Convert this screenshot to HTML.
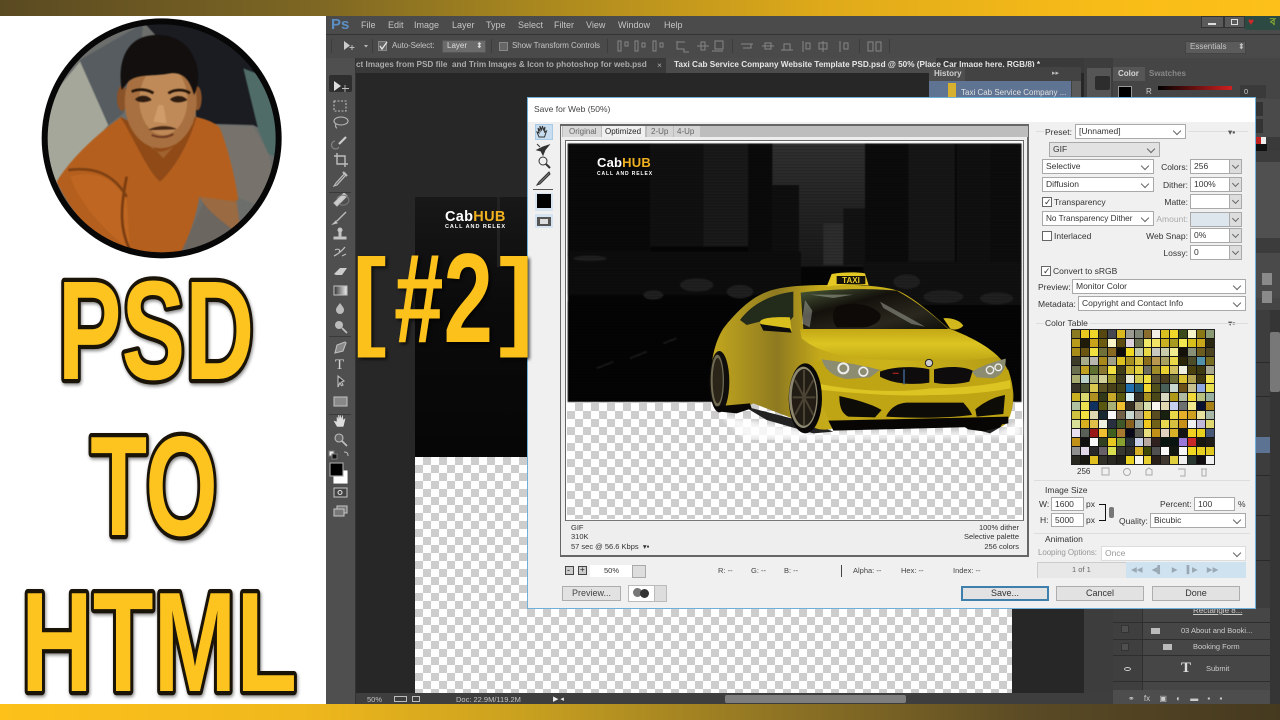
<!DOCTYPE html>
<html><head><meta charset="utf-8"><title>PSD to HTML #2</title>
<style>
*{box-sizing:border-box}
html,body{margin:0;padding:0;background:#fff}
body{width:1280px;height:720px;overflow:hidden;position:relative;font-family:"Liberation Sans",sans-serif}
.a,.t,.s,.n{position:absolute}
.t{white-space:nowrap;line-height:10px;font-size:8.5px;color:#333}
.g{color:#c4c4c4}
.r{text-align:right}
.s,.n{background:#fff;border:1px solid #a9a9a9;height:15px;line-height:13px;font-size:8.5px;color:#333;padding-left:3px;white-space:nowrap}
.s:after{content:"";position:absolute;right:5px;top:3px;width:5px;height:5px;border:solid #666;border-width:0 1px 1px 0;transform:rotate(45deg)}
.n i{position:absolute;right:0;top:0;bottom:0;width:12px;background:#ddd;border-left:1px solid #aaa}
.n i:after{content:"";position:absolute;left:3px;top:3px;width:4px;height:4px;border:solid #666;border-width:0 1px 1px 0;transform:rotate(45deg)}
.b{position:absolute;background:#e2e2e2;border:1px solid #adadad;text-align:center;font-size:8.5px;color:#333;height:14px;line-height:12px}
.c{position:absolute;width:10px;height:10px;background:#fff;border:1px solid #666}
.chk{position:absolute;left:1px;top:0;color:#333;font-size:9px;line-height:8px}
.ck{background-image:conic-gradient(#cdcdcd 25%,#fff 0 50%,#cdcdcd 0 75%,#fff 0);background-size:16px 16px}
#ct{position:absolute;left:1071px;top:329px;width:144px;height:136px;display:grid;grid-template-columns:repeat(16,1fr);grid-template-rows:repeat(15,1fr);gap:1px;background:#141414;border:1px solid #222}
#ct i{display:block}
.lg{position:absolute;height:1px;background:#ddd}
</style></head><body>

<!-- gold bars -->
<div class="a" style="left:0;top:0;width:1280px;height:16px;background:linear-gradient(90deg,#5a4a22 0,#7f6823 326px,#a8871f 530px,#dfaa1a 826px,#f8bc18 1100px,#fdc01a 1280px)"></div>

<!-- PHOTOSHOP -->
<div class="a" style="left:326px;top:16px;width:954px;height:688px;background:#272727;overflow:hidden;filter:blur(.3px)">
  <div class="a" style="left:0;top:0;width:954px;height:18px;background:#4b4b4b"></div>
  <div class="a" style="left:0;top:18px;width:954px;height:1px;background:#333"></div>
  <div class="a" style="left:0;top:19px;width:954px;height:23px;background:#4a4a4a"></div>
  <div class="a" style="left:0;top:42px;width:954px;height:15px;background:#3a3a3a"></div>
  <div class="a" style="left:0;top:42px;width:30px;height:646px;background:#4f4f4f;border-right:1px solid #333"></div>
  <div class="a" style="left:30px;top:42px;width:310px;height:15px;background:#393939"></div>
  <div class="a" style="left:340px;top:42px;width:270px;height:15px;background:#4c4c4c"></div>
  <div class="a" style="left:3px;top:59px;width:23px;height:17px;background:#2e2e2e;border-radius:2px"></div>
</div>
<div class="t" style="left:331px;top:17px;font:bold 15px/16px 'Liberation Sans',sans-serif;color:#5b8fc4">Ps</div>
<div class="t g" style="left:361px;top:20px;font-size:9px">File</div>
<div class="t g" style="left:388px;top:20px;font-size:9px">Edit</div>
<div class="t g" style="left:414px;top:20px;font-size:9px">Image</div>
<div class="t g" style="left:452px;top:20px;font-size:9px">Layer</div>
<div class="t g" style="left:486px;top:20px;font-size:9px">Type</div>
<div class="t g" style="left:518px;top:20px;font-size:9px">Select</div>
<div class="t g" style="left:554px;top:20px;font-size:9px">Filter</div>
<div class="t g" style="left:586px;top:20px;font-size:9px">View</div>
<div class="t g" style="left:618px;top:20px;font-size:9px">Window</div>
<div class="t g" style="left:664px;top:20px;font-size:9px">Help</div>

<!-- option bar icons -->
<svg class="a" style="left:326px;top:36px" width="580" height="20" viewBox="326 36 580 20" fill="none" stroke="#858585">
<path d="M344 41l6 4.500-6 4.500z" fill="#ccc" stroke="none"/><path d="M352 45v5M349.500 47.500h5" stroke="#bbb"/>
<path d="M364 45h4l-2 2.500z" fill="#bbb" stroke="none"/>
<path d="M331.500 39v14M372.500 39v14M491.500 39v14M607.500 39v14M732.500 39v14M859.500 39v14M889.500 39v14" stroke="#3c3c3c"/>
<path d="M618 41v10h3V41zM625 42h3v4h-3zM635 41v10h3V41zM642 43h3v4h-3zM653 41v10h3V41zM660 43h3v4h-3z"/>
<path d="M677 41v8h7v3h5M685 42h-8M697 46h12M701 42h4v8h-4zM712 51h11M715 41h8v8h-8z"/>
<path d="M741 44h12M743 48h8v-4M762 46h12M765 43h6v6h-6zM781 50h12M784 44h6v6h-6z"/>
<path d="M803 41v11M806 43h4v6h-4zM823 41v11M819 43h8v6h-8zM840 41v11M844 43h4v6h-4zM868 42h5v9h-5zM876 42h5v9h-5z"/>
</svg>
<div class="a" style="left:378px;top:41px;width:9px;height:10px;background:#666;border:1px solid #888"></div>
<svg class="a" style="left:378px;top:40px" width="12" height="12" fill="none" stroke="#e6e6e6" stroke-width="1.300"><path d="M2 6l2 3 5-7"/></svg>
<div class="t g" style="left:392px;top:41px;font-size:8px;letter-spacing:-.1px">Auto-Select:</div>
<div class="a" style="left:442px;top:40px;width:44px;height:13px;background:#6b6b6b;border:1px solid #555"></div>
<div class="t" style="left:447px;top:41px;font-size:8px;color:#ddd">Layer</div>
<div class="t" style="left:476px;top:41px;font-size:8px;color:#ddd">⬍</div>
<div class="a" style="left:499px;top:42px;width:9px;height:9px;background:#666;border:1px solid #888"></div>
<div class="t g" style="left:512px;top:41px;font-size:8px;letter-spacing:-.1px">Show Transform Controls</div>
<div class="a" style="left:1185px;top:41px;width:61px;height:13px;background:#5b5b5b;border:1px solid #444"></div>
<div class="t g" style="left:1190px;top:42px;font-size:8px">Essentials</div>
<div class="t g" style="left:1238px;top:42px;font-size:8px">⬍</div>
<div class="t" style="left:356px;top:60px;font-size:8.2px;color:#aaa;font-weight:bold">ct Images from PSD file&nbsp; and Trim Images &amp; Icon to photoshop for web.psd</div>
<div class="t" style="left:657px;top:60px;font-size:8.5px;color:#aaa">×</div>
<div class="t" style="left:674px;top:60px;font-size:8.2px;color:#e6e6e6;font-weight:bold">Taxi Cab Service Company Website Template PSD.psd @ 50% (Place Car Image here, RGB/8) *</div>

<!-- panels behind dialog -->
<div class="a" style="left:929px;top:67px;width:152px;height:32px;background:#434343"></div>
<div class="a" style="left:929px;top:67px;width:36px;height:14px;background:#4e4e4e"></div>
<div class="t" style="left:934px;top:69px;font-size:8px;font-weight:bold;color:#d0d0d0">History</div>
<div class="t" style="left:1052px;top:69px;font-size:7px;color:#bbb">▸▸</div>
<div class="a" style="left:929px;top:81px;width:142px;height:18px;background:#5f7392"></div>
<div class="a" style="left:948px;top:83px;width:8px;height:15px;background:#d8b030"></div>
<div class="t" style="left:961px;top:88px;font-size:8px;color:#e2e2e2">Taxi Cab Service Company ...</div>
<div class="a" style="left:1072px;top:81px;width:9px;height:18px;background:#5a5a5a"></div>
<div class="a" style="left:1084px;top:58px;width:29px;height:646px;background:#3d3d3d"></div>
<div class="a" style="left:1087px;top:68px;width:24px;height:30px;background:#555"></div>
<div class="a" style="left:1095px;top:76px;width:15px;height:14px;background:#2d2d2d;border-radius:2px"></div>
<div class="a" style="left:1113px;top:58px;width:167px;height:646px;background:#454545"></div>
<div class="a" style="left:1113px;top:67px;width:32px;height:14px;background:#565656"></div>
<div class="t" style="left:1118px;top:69px;font-size:8px;font-weight:bold;color:#d6d6d6">Color</div>
<div class="t" style="left:1149px;top:69px;font-size:8px;font-weight:bold;color:#888">Swatches</div>
<div class="a" style="left:1118px;top:86px;width:14px;height:13px;background:#000;border:1px solid #999"></div>
<div class="t" style="left:1146px;top:87px;font-size:8px;color:#ccc">R</div>
<div class="a" style="left:1158px;top:86px;width:74px;height:4px;background:linear-gradient(90deg,#000,#d02020)"></div>
<div class="a" style="left:1240px;top:85px;width:26px;height:13px;background:#3a3a3a"></div>
<div class="t" style="left:1244px;top:87px;font-size:7.5px;color:#ccc">0</div>
<div class="a" style="left:1255px;top:99px;width:25px;height:40px;background:#4a4a4a"></div>
<div class="a" style="left:1255px;top:102px;width:8px;height:14px;background:#333"></div>
<div class="a" style="left:1255px;top:119px;width:8px;height:14px;background:#333"></div>
<div class="a" style="left:1255px;top:137px;width:25px;height:14px;background:#3a3a3a"></div>
<div class="a" style="left:1255px;top:137px;width:6px;height:7px;background:#c02020"></div>
<div class="a" style="left:1261px;top:137px;width:5px;height:7px;background:#eee"></div>
<div class="a" style="left:1255px;top:144px;width:12px;height:7px;background:#111"></div>
<div class="a" style="left:1255px;top:151px;width:25px;height:11px;background:#3c3c3c"></div>
<div class="a" style="left:1255px;top:162px;width:25px;height:76px;background:#505050"></div>
<div class="a" style="left:1255px;top:238px;width:25px;height:15px;background:#3c3c3c"></div>
<div class="a" style="left:1255px;top:253px;width:25px;height:45px;background:#4a4a4a"></div>
<div class="a" style="left:1262px;top:273px;width:10px;height:12px;background:#8a8a8a"></div>
<div class="a" style="left:1262px;top:291px;width:10px;height:12px;background:#8a8a8a"></div>
<div class="a" style="left:1255px;top:310px;width:25px;height:394px;background:#3d3d3d"></div>
<div class="a" style="left:1270px;top:310px;width:10px;height:394px;background:#353535"></div>
<div class="a" style="left:1270px;top:332px;width:10px;height:60px;background:#787878;border-radius:2px"></div>
<div class="a" style="left:1255px;top:437px;width:15px;height:16px;background:#5d7394"></div>
<div class="a" style="left:1255px;top:362px;width:15px;height:1px;background:#2a2a2a"></div>
<div class="a" style="left:1255px;top:396px;width:15px;height:1px;background:#2a2a2a"></div>
<div class="a" style="left:1255px;top:475px;width:15px;height:1px;background:#2a2a2a"></div>
<div class="a" style="left:1255px;top:515px;width:15px;height:1px;background:#2a2a2a"></div>
<div class="a" style="left:1255px;top:560px;width:15px;height:1px;background:#2a2a2a"></div>
<div class="a" style="left:1201px;top:16px;width:23px;height:12px;background:#5a5a5a;border:1px solid #333"></div>
<div class="a" style="left:1224px;top:16px;width:21px;height:12px;background:#5a5a5a;border:1px solid #333"></div>
<div class="a" style="left:1208px;top:23px;width:8px;height:2px;background:#ddd"></div>
<div class="a" style="left:1231px;top:19px;width:7px;height:6px;border:1px solid #ddd"></div>
<div class="a" style="left:1245px;top:16px;width:35px;height:14px;background:#2c4a42"></div>
<div class="t" style="left:1248px;top:17px;font:bold 10px/11px 'Liberation Sans','Noto Sans CJK SC',sans-serif;color:#d02828">♥</div>
<div class="t" style="left:1270px;top:17px;font:bold 10px/11px 'Liberation Sans','Noto Sans CJK SC',sans-serif;color:#8fb030">ব</div>

<!-- bottom layers -->
<div class="a" style="left:1113px;top:608px;width:157px;height:96px;background:#464646"></div>
<div class="a" style="left:1113px;top:608px;width:30px;height:88px;background:#3f3f3f;border-right:1px solid #303030"></div>
<div class="a" style="left:1113px;top:622px;width:157px;height:1px;background:#2e2e2e"></div>
<div class="a" style="left:1113px;top:639px;width:157px;height:1px;background:#2e2e2e"></div>
<div class="a" style="left:1113px;top:655px;width:157px;height:1px;background:#2e2e2e"></div>
<div class="a" style="left:1113px;top:681px;width:157px;height:1px;background:#2e2e2e"></div>
<div class="a" style="left:1113px;top:690px;width:157px;height:14px;background:#4d4d4d"></div>
<div class="t" style="left:1193px;top:606px;font-size:8px;color:#ccc;text-decoration:underline">Rectangle 8...</div>
<div class="t" style="left:1181px;top:626px;font-size:7.5px;color:#ccc">03 About and Booki...</div>
<div class="t" style="left:1193px;top:642px;font-size:7.5px;color:#ccc">Booking Form</div>
<div class="t" style="left:1206px;top:664px;font-size:7.5px;color:#ccc">Submit</div>
<div class="t" style="left:1181px;top:660px;font:bold 15px/16px 'Liberation Serif',serif;color:#ddd">T</div>
<div class="a" style="left:1121px;top:625px;width:8px;height:8px;background:#4f4f4f;border:1px solid #333"></div>
<div class="a" style="left:1121px;top:643px;width:8px;height:8px;background:#4f4f4f;border:1px solid #333"></div>
<div class="a" style="left:1151px;top:628px;width:9px;height:6px;background:#bbb"></div>
<div class="a" style="left:1163px;top:644px;width:9px;height:6px;background:#bbb"></div>
<div class="a" style="left:1124px;top:667px;width:7px;height:4px;border-radius:50%;border:1px solid #ccc"></div>
<div class="t" style="left:1128px;top:694px;font-size:8px;color:#ccc;word-spacing:7px">⚭ fx ▣ ◐ ▬ ▪ ▪</div>

<!-- document -->
<div class="a" style="left:415px;top:197px;width:597px;height:260px;background:linear-gradient(#181818,#0b0b0b 40%,#060606)"></div>
<div class="a" style="left:497px;top:197px;width:3px;height:70px;background:#222"></div>
<div class="a ck" style="left:415px;top:457px;width:597px;height:236px"></div>
<div class="t" style="left:445px;top:210px;font:bold 14.5px/15px 'Liberation Sans',sans-serif;color:#fff;letter-spacing:.3px">Cab<span style="color:#f0b020">HUB</span></div>
<div class="t" style="left:445px;top:224px;font:bold 5.5px/7px 'Liberation Sans',sans-serif;color:#fff;letter-spacing:.95px">CALL AND RELEX</div>

<!-- status bar -->
<div class="a" style="left:356px;top:693px;width:757px;height:11px;background:#3e3e3e"></div>
<div class="t g" style="left:367px;top:695px;font-size:7.5px">50%</div>
<div class="a" style="left:394px;top:696px;width:13px;height:6px;border:1px solid #bbb"></div>
<div class="a" style="left:412px;top:696px;width:8px;height:6px;border:1px solid #bbb"></div>
<div class="t g" style="left:456px;top:695px;font-size:7.5px">Doc: 22.9M/119.2M</div>
<div class="t" style="left:553px;top:695px;font-size:7px;color:#eee">▶ ◂</div>
<div class="a" style="left:725px;top:695px;width:181px;height:8px;background:#7e7e7e;border-radius:2px"></div>

<!-- tools -->
<svg class="a" style="left:326px;top:75px" width="30" height="460" viewBox="326 75 30 460" fill="none" stroke="#bdbdbd" stroke-width="1.100">
<defs><linearGradient id="gr"><stop offset="0" stop-color="#333"/><stop offset="1" stop-color="#eee"/></linearGradient></defs>
<path d="M334 81l7 5-7 5z" fill="#ddd" stroke="none"/><path d="M345 85v7M342 88.500h7" stroke-width=".9"/>
<rect x="334" y="101" width="12" height="10" stroke-dasharray="2 1.500"/>
<ellipse cx="341" cy="121" rx="7" ry="4"/><path d="M336 124c-1 2 0 4 1 4"/>
<path d="M346 137l-7 7" stroke-width="2.200" stroke="#ccc"/><path d="M335 141a4 4 0 1 0 4 6" stroke="#888"/>
<path d="M337 153v11h11M334 156h11v11" stroke-width="1.400"/>
<path d="M345 173l-9 10-2 3 3-1 9-10z" fill="#666"/><path d="M343 172l4 4" stroke-width="2.200"/>
<path d="M334 203l10-10 3 3-10 10z" fill="#ccc"/><path d="M337 199a6 5 0 1 1 2 5" stroke="#777"/>
<path d="M346 212l-9 9" stroke-width="1.300"/><path d="M336 221l-3 3 4-1z" fill="#ccc"/>
<circle cx="340" cy="230" r="2" fill="#ccc"/><path d="M339 232h2v4h-2zM334 237h12v2h-12z" fill="#ccc"/>
<path d="M334 256c4-2 7-4 11-9" stroke-width="1.300"/><path d="M335 250c3-2 6 0 4 2M342 256l4-2"/>
<path d="M334 274l6-6h7l-5 7h-6z" fill="#ccc" stroke="none"/>
<rect x="334" y="286" width="13" height="9" fill="url(#gr)" stroke="#bbb"/>
<path d="M340 303c-3 4-4 5-4 7a4 4 0 0 0 8 0c0-2-1-3-4-7z" fill="#bbb" stroke="none"/>
<circle cx="339" cy="325" r="4" fill="#bbb" stroke="none"/><path d="M342 328l5 5" stroke-width="1.800"/>
<path d="M345 342l-8 3-2 8 8-2 3-8z" fill="#888"/>
<rect x="334" y="397" width="13" height="9" fill="#888" stroke="#bbb"/>
<path d="M338 387V376l6 5-2.500 1 1.500 3-1.500 .7-1.500-3z" fill="#333"/>
<path d="M334 421l3 1v-5l1.500 3v-5l1.500 4.500v-5l1.500 5 1-4 .7 5 2-2-2 8h-6z" fill="#ddd" stroke="#ddd" stroke-width=".5"/>
<circle cx="339" cy="438" r="4" fill="#666"/><path d="M342 441l5 5" stroke-width="1.800"/>
<rect x="329" y="451" width="5" height="5" fill="#eee" stroke="#777"/><rect x="332" y="454" width="5" height="5" fill="#111" stroke="#777"/>
<path d="M344 452c3 0 4 1 4 4" stroke-width="1"/>
<rect x="334" y="471" width="13" height="12" fill="#fff" stroke="#fff"/>
<rect x="330" y="463" width="13" height="13" fill="#000" stroke="#aaa"/>
<rect x="334" y="488" width="13" height="9" fill="#444" stroke="#bbb"/><circle cx="340" cy="492.500" r="2" stroke="#ddd"/>
<rect x="337" y="506" width="10" height="7" fill="#777"/><rect x="334" y="509" width="10" height="7" fill="#777"/>
<path d="M329 192.500h22M329 336.500h22M329 414.500h22" stroke="#3a3a3a"/>
</svg>
<div class="t" style="left:335px;top:358px;font:15px/15px 'Liberation Serif',serif;color:#d4d4d4">T</div>

<!-- DIALOG -->
<div class="a" style="left:527px;top:97px;width:729px;height:512px;background:#f0f0f0;border:1px solid #6fb0d8"></div>
<div class="a" style="left:528px;top:98px;width:727px;height:24px;background:#fff"></div>
<div class="t" style="left:534px;top:104px;font-size:8.5px;color:#444">Save for Web (50%)</div>
<div class="a" style="left:535px;top:124px;width:18px;height:16px;background:#c8ddf0;border:1px solid #a9cbe6"></div>
<svg class="a" style="left:532px;top:122px" width="24" height="110" viewBox="532 122 24 110" fill="none" stroke="#333">
<path d="M539 137l-2-5 2 1-1-5 2 3v-5l1.500 4 1-4 1 4 1.500-3-.5 5 2-1-2 6z"/>
<path d="M537 150l6-3 6-2-4 5-2 5-2-4z" fill="#333"/><path d="M537 144l3 3" />
<circle cx="543" cy="161" r="4"/><path d="M546 164l4 4" stroke-width="2"/>
<path d="M549 172l-10 10-2 3 3-1 10-10z" fill="#777"/>
<path d="M533 189.500h20" stroke="#555"/>
<rect x="535" y="193" width="18" height="18" fill="#d5e4f0" stroke="none"/><rect x="537" y="194" width="14" height="14" fill="#000" stroke="none"/>
<rect x="535" y="214" width="18" height="14" fill="#d5e4f0" stroke="none"/><rect x="537" y="217" width="14" height="9" fill="#555" stroke="none"/><rect x="540" y="219" width="8" height="5" fill="#ddd" stroke="none"/>
</svg>

<div class="a" style="left:560px;top:124px;width:469px;height:433px;background:#eee;border:1px solid #666;border-width:2px 2px 2px 1px"></div>
<div class="a" style="left:562px;top:126px;width:466px;height:11px;background:#bdbdbd"></div>
<div class="a" style="left:563px;top:126px;width:38px;height:11px;background:#d8d8d8"></div>
<div class="a" style="left:602px;top:126px;width:43px;height:11px;background:#f0f0f0"></div>
<div class="a" style="left:647px;top:126px;width:26px;height:11px;background:#d4d4d4"></div>
<div class="a" style="left:674px;top:126px;width:26px;height:11px;background:#d4d4d4"></div>
<div class="t" style="left:569px;top:127px;font-size:8px;color:#666">Original</div>
<div class="t" style="left:605px;top:127px;font-size:8px;color:#222">Optimized</div>
<div class="t" style="left:651px;top:127px;font-size:8px;color:#666">2-Up</div>
<div class="t" style="left:677px;top:127px;font-size:8px;color:#666">4-Up</div>
<div class="a" style="left:565px;top:140px;width:459px;height:381px;border:1px solid #666;background:#fff"></div>
<div class="a ck" style="left:567px;top:403px;width:455px;height:116px"></div>
<div class="a" style="left:566px;top:520px;width:458px;height:35px;background:#eee;border-top:1px solid #777"></div>

<svg class="a" style="left:530px;top:95px;filter:blur(.5px)" width="500" height="350" viewBox="0 0 1500 1050">
<defs>
<clipPath id="im"><rect x="113" y="145" width="1362" height="776"/></clipPath>
<linearGradient id="sk" x1="0" y1="0" x2="0" y2="1"><stop offset="0" stop-color="#343434"/><stop offset="1" stop-color="#1a1a1a"/></linearGradient>
<pattern id="sl" width="10" height="9" patternUnits="userSpaceOnUse"><rect width="10" height="4" fill="#000" opacity=".25"/></pattern>
</defs>
<g clip-path="url(#im)">
<rect x="113" y="145" width="1362" height="776" fill="#050505"/>
<rect x="725" y="145" width="290" height="370" fill="url(#sk)"/>
<rect x="880" y="385" width="60" height="125" fill="#303030"/>
<rect x="113" y="145" width="250" height="340" fill="#0a0a0a"/>
<rect x="360" y="145" width="160" height="310" fill="#121212"/>
<rect x="520" y="145" width="135" height="310" fill="#1b1b1b"/>
<rect x="655" y="145" width="72" height="340" fill="#0b0b0b"/>
<rect x="725" y="270" width="82" height="230" fill="#101010"/>
<rect x="1005" y="145" width="130" height="400" fill="#0c0c0c"/>
<rect x="940" y="340" width="65" height="170" fill="#141414"/>
<rect x="1135" y="145" width="140" height="380" fill="#181818"/>
<rect x="1280" y="145" width="100" height="380" fill="#121212"/>
<rect x="1380" y="145" width="95" height="380" fill="#0e0e0e"/>
<rect x="113" y="470" width="700" height="130" fill="#0e0e0e"/>
<rect x="1000" y="500" width="475" height="130" fill="#111"/>
<g fill="#222"><ellipse cx="500" cy="570" rx="50" ry="20"/><ellipse cx="630" cy="590" rx="40" ry="20"/><ellipse cx="370" cy="600" rx="30" ry="14"/><ellipse cx="1240" cy="605" rx="60" ry="20"/><ellipse cx="1400" cy="610" rx="50" ry="18"/><ellipse cx="1130" cy="560" rx="40" ry="22"/><ellipse cx="180" cy="490" rx="50" ry="8"/></g>
<rect x="113" y="620" width="500" height="301" fill="#040404"/>
<path d="M200 820l50-20M300 790l50-20M400 745l40-15" stroke="#1a1a1a" stroke-width="6"/>
<rect x="113" y="145" width="1362" height="776" fill="url(#sl)"/>
</g>
</svg>

<!-- car -->
<svg class="a" style="left:700px;top:260px;filter:blur(.35px)" width="330" height="180" viewBox="0 0 990 540">
<defs>
<linearGradient id="bd" x1="0" y1="0" x2="1" y2="0"><stop offset="0" stop-color="#c4a81e"/><stop offset=".22" stop-color="#8e7a20"/><stop offset=".36" stop-color="#c4a91a"/><stop offset=".6" stop-color="#ccb31a"/><stop offset="1" stop-color="#b39b16"/></linearGradient>
<linearGradient id="hd" x1="0" y1="0" x2="0" y2="1"><stop offset="0" stop-color="#c0a414"/><stop offset=".5" stop-color="#dcc522"/><stop offset="1" stop-color="#bfa716"/></linearGradient>
<linearGradient id="ws" x1="0" y1="0" x2="1" y2="1"><stop offset="0" stop-color="#4a5a38"/><stop offset=".35" stop-color="#14110c"/><stop offset=".7" stop-color="#2a281e"/><stop offset="1" stop-color="#0f0f0a"/></linearGradient>
<filter id="bl" x="-20%" y="-50%" width="140%" height="200%"><feGaussianBlur stdDeviation="7"/></filter>
</defs>
<path d="M60 465L350 520 900 515 965 480 965 530 140 540z" fill="#fff" filter="url(#bl)" opacity=".8"/>
<path d="M130 438L340 492 400 515 340 520 200 480z" fill="#222"/>
<path d="M800 500L920 490 870 520z" fill="#222"/>
<path d="M35 395C28 340 35 260 70 205C105 160 150 115 195 98C230 82 290 75 380 75C470 72 560 78 600 95C650 120 700 165 745 205C800 225 860 255 895 290C925 320 935 350 940 400C942 450 925 490 905 500L400 505C370 512 350 510 330 495L160 430C130 445 90 460 60 450z" fill="url(#bd)"/>
<path d="M300 208C420 200 600 200 745 205C800 225 860 255 895 290C770 310 620 300 520 298C430 290 360 280 305 235z" fill="url(#hd)"/>
<path d="M340 300C470 320 560 340 690 325C780 325 880 320 925 330C940 380 940 420 930 470L400 490C370 470 355 400 340 300z" fill="#bfa414"/>
<path d="M360 372C480 395 600 398 690 385 780 385 870 375 930 360L932 385C850 400 760 405 690 405 590 410 470 400 365 390z" fill="#dcc422"/>
<path d="M120 180C150 140 200 105 280 95L280 170 270 182 180 185 140 195z" fill="#232b1a"/>
<path d="M180 185C185 172 230 170 270 172L275 215 190 210z" fill="#d9bf1e"/><path d="M180 192L270 205 275 218 190 212z" fill="#0c0c0c"/>
<path d="M302 98C400 85 520 85 590 92C650 125 700 165 745 207L310 207z" fill="url(#ws)"/>
<path d="M315 120l-10 70 24 12 8-50zM540 125l100 55 35 20-40-8-85-48zM330 104h130l-60 10z" fill="#c8ccc0" opacity=".4"/>
<path d="M410 140c40-15 100-10 130 20 10 20-20 40-50 42h-80c-15-20-15-45 0-62z" fill="#0e0a08"/>
<path d="M730 175c20-3 50 5 60 22-10 12-30 15-40 8z" fill="#d2b81c"/>
<ellipse cx="58" cy="365" rx="30" ry="92" fill="#100e0c"/>
<ellipse cx="52" cy="362" rx="20" ry="78" fill="#6e6950"/>
<ellipse cx="53" cy="362" rx="15" ry="68" fill="#2a2518"/>
<path d="M40 440L150 430 155 445 110 460 60 455z" fill="#0a0806"/>
<ellipse cx="316" cy="415" rx="50" ry="105" fill="#0a0806"/>
<ellipse cx="310" cy="412" rx="43" ry="92" fill="#8e8870"/>
<ellipse cx="312" cy="412" rx="37" ry="85" fill="#211c14"/>
<path d="M312 330v165M285 360l55 105M340 360l-55 105M278 412h68" stroke="#4a4232" stroke-width="6"/>
<path d="M365 298C420 305 490 315 540 330L510 352 440 357C400 350 375 330 365 298z" fill="#8c8c70"/>
<circle cx="430" cy="325" r="15" fill="none" stroke="#eee" stroke-width="6"/><circle cx="490" cy="335" r="13" fill="none" stroke="#eee" stroke-width="5"/>
<path d="M815 335C850 315 885 305 917 296 918 320 910 345 880 355L830 352z" fill="#8c8c70"/>
<circle cx="870" cy="330" r="11" fill="none" stroke="#eee" stroke-width="4"/><circle cx="895" cy="322" r="10" fill="none" stroke="#eee" stroke-width="4"/>
<path d="M540 335C580 318 650 318 688 328L688 368C640 376 580 372 540 350z" fill="#0e0c0c"/>
<path d="M702 328C740 318 790 318 818 332L808 365C770 375 730 374 702 368z" fill="#0e0c0c"/>
<path d="M612 328v45" stroke="#3a5a80" stroke-width="5"/><path d="M578 340h18" stroke="#a02020" stroke-width="4"/>
<circle cx="687" cy="309" r="11" fill="#ccc" stroke="#222" stroke-width="3"/>
<path d="M418 408C470 420 510 430 545 450L525 472 445 470C425 460 418 440 418 408z" fill="#0e0c06"/>
<path d="M558 470C570 445 590 430 620 428L790 428C800 440 810 450 816 465 740 475 640 475 558 470z" fill="#0e0c08"/>
<path d="M826 448C860 420 890 410 915 405L910 462 830 470z" fill="#0e0c06"/>
<path d="M385 482L925 470 925 490 860 500 400 512z" fill="#080604"/>
<path d="M780 492l130-4-10 14-50 12-45-6z" fill="#080604"/>
<path d="M380 80L395 42C430 36 470 36 495 40L506 76C470 72 420 74 380 80z" fill="#e4c824"/>
<rect x="410" y="48" width="86" height="24" fill="#15120a"/>
<text x="453" y="69" text-anchor="middle" font-family="Liberation Sans,sans-serif" font-weight="bold" font-size="24" fill="#e8cc30">TAXI</text>
</svg>

<div class="t" style="left:597px;top:156px;font:bold 13px/14px 'Liberation Sans',sans-serif;color:#fff;letter-spacing:.2px">Cab<span style="color:#eeb020">HUB</span></div>
<div class="t" style="left:597px;top:171px;font:bold 5px/6px 'Liberation Sans',sans-serif;color:#fff;letter-spacing:.9px">CALL AND RELEX</div>

<div class="t" style="left:571px;top:523px;font-size:7.5px">GIF</div>
<div class="t" style="left:571px;top:532px;font-size:7.5px">310K</div>
<div class="t" style="left:571px;top:542px;font-size:7.5px">57 sec @ 56.6 Kbps&nbsp; ▾▪</div>
<div class="t r" style="right:261px;top:523px;font-size:7.5px">100% dither</div>
<div class="t r" style="right:261px;top:532px;font-size:7.5px">Selective palette</div>
<div class="t r" style="right:261px;top:542px;font-size:7.5px">256 colors</div>

<div class="a" style="left:565px;top:566px;width:9px;height:9px;background:#ccc;border:1px solid #444"></div>
<div class="a" style="left:578px;top:566px;width:9px;height:9px;background:#ccc;border:1px solid #444"></div>
<div class="t" style="left:567px;top:565px;font-size:9px;color:#222">-</div>
<div class="t" style="left:580px;top:565px;font-size:8px;color:#222">+</div>
<div class="a" style="left:590px;top:565px;width:42px;height:12px;background:#fff"></div>
<div class="t" style="left:604px;top:566px;font-size:7.5px">50%</div>
<div class="a" style="left:632px;top:565px;width:14px;height:13px;background:#ddd;border:1px solid #aaa"></div>
<div class="t" style="left:718px;top:566px;font-size:7.5px;color:#444">R: --</div>
<div class="t" style="left:751px;top:566px;font-size:7.5px;color:#444">G: --</div>
<div class="t" style="left:784px;top:566px;font-size:7.5px;color:#444">B: --</div>
<div class="a" style="left:841px;top:565px;width:1px;height:12px;background:#444"></div>
<div class="t" style="left:853px;top:566px;font-size:7.5px;color:#444">Alpha: --</div>
<div class="t" style="left:901px;top:566px;font-size:7.5px;color:#444">Hex: --</div>
<div class="t" style="left:953px;top:566px;font-size:7.5px;color:#444">Index: --</div>
<div class="b" style="left:562px;top:586px;width:59px;height:15px;line-height:13px;font-size:9px;color:#444">Preview...</div>
<div class="a" style="left:628px;top:585px;width:39px;height:17px;background:#fff;border:1px solid #bbb"></div>
<div class="a" style="left:633px;top:588px;width:9px;height:9px;border-radius:50%;background:#777"></div>
<div class="a" style="left:640px;top:589px;width:9px;height:9px;border-radius:50%;background:#333"></div>
<div class="a" style="left:654px;top:585px;width:13px;height:17px;background:#ddd;border:1px solid #bbb"></div>
<div class="b" style="left:961px;top:586px;width:88px;height:15px;line-height:11px;border:2px solid #3f7fae;font-size:9px">Save...</div>
<div class="b" style="left:1056px;top:586px;width:88px;height:15px;line-height:13px;font-size:9px">Cancel</div>
<div class="b" style="left:1152px;top:586px;width:88px;height:15px;line-height:13px;font-size:9px">Done</div>

<!-- right settings -->
<div class="lg" style="left:1036px;top:131px;width:8px"></div><div class="lg" style="left:1188px;top:131px;width:60px"></div>
<div class="t" style="left:1045px;top:127px">Preset:</div>
<div class="s" style="left:1075px;top:124px;width:111px">[Unnamed]</div>
<div class="t" style="left:1228px;top:127px;color:#555">▾▪</div>
<div class="s" style="left:1049px;top:142px;width:111px;background:#e2e2e2">GIF</div>
<div class="s" style="left:1042px;top:159px;width:112px">Selective</div>
<div class="s" style="left:1042px;top:177px;width:112px">Diffusion</div>
<div class="t r" style="right:92px;top:162px">Colors:</div>
<div class="n" style="left:1190px;top:159px;width:52px">256<i></i></div>
<div class="t r" style="right:92px;top:180px">Dither:</div>
<div class="n" style="left:1190px;top:177px;width:52px">100%<i></i></div>
<div class="c" style="left:1042px;top:197px"><span class="chk">✓</span></div>
<div class="t" style="left:1054px;top:197px">Transparency</div>
<div class="t r" style="right:92px;top:197px">Matte:</div>
<div class="n" style="left:1190px;top:194px;width:52px"><i></i></div>
<div class="s" style="left:1042px;top:211px;width:112px;font-size:8.2px">No Transparency Dither</div>
<div class="t r" style="right:92px;top:214px;color:#aaa">Amount:</div>
<div class="n" style="left:1190px;top:212px;width:52px;background:#dde6ec"><i></i></div>
<div class="c" style="left:1042px;top:231px"></div>
<div class="t" style="left:1054px;top:231px">Interlaced</div>
<div class="t r" style="right:92px;top:231px">Web Snap:</div>
<div class="n" style="left:1190px;top:228px;width:52px">0%<i></i></div>
<div class="t r" style="right:92px;top:248px">Lossy:</div>
<div class="n" style="left:1190px;top:245px;width:52px">0<i></i></div>
<div class="c" style="left:1041px;top:266px"><span class="chk">✓</span></div>
<div class="t" style="left:1053px;top:266px">Convert to sRGB</div>
<div class="t" style="left:1038px;top:282px">Preview:</div>
<div class="s" style="left:1072px;top:279px;width:174px">Monitor Color</div>
<div class="t" style="left:1038px;top:299px">Metadata:</div>
<div class="s" style="left:1078px;top:296px;width:168px">Copyright and Contact Info</div>
<div class="t" style="left:1045px;top:318px">Color Table</div>
<div class="t" style="left:1228px;top:318px;color:#555">▾▪</div>
<div class="lg" style="left:1036px;top:323px;width:8px"></div><div class="lg" style="left:1090px;top:323px;width:158px"></div>

<div id="ct"><i style="background:#8a7a20"></i><i style="background:#e6c820"></i><i style="background:#efd628"></i><i style="background:#55470f"></i><i style="background:#454850"></i><i style="background:#d9b91f"></i><i style="background:#9b9b92"></i><i style="background:#808677"></i><i style="background:#8a6c2e"></i><i style="background:#f2efe6"></i><i style="background:#d9bf1f"></i><i style="background:#f0d72a"></i><i style="background:#3a4a1a"></i><i style="background:#f8f5c8"></i><i style="background:#8a7816"></i><i style="background:#8a9a72"></i>
<i style="background:#b89b1a"></i><i style="background:#201a08"></i><i style="background:#c9a31a"></i><i style="background:#6c5c12"></i><i style="background:#f8f5c8"></i><i style="background:#5c4c10"></i><i style="background:#ddd2dc"></i><i style="background:#6c7250"></i><i style="background:#f0e868"></i><i style="background:#f1e466"></i><i style="background:#c9b122"></i><i style="background:#a89a20"></i><i style="background:#f2e850"></i><i style="background:#d8c01c"></i><i style="background:#c8a81a"></i><i style="background:#2a2810"></i>
<i style="background:#a88c18"></i><i style="background:#6a5610"></i><i style="background:#f0e040"></i><i style="background:#70703a"></i><i style="background:#8a6a20"></i><i style="background:#0e0c08"></i><i style="background:#f0d820"></i><i style="background:#c0c8a8"></i><i style="background:#e8d848"></i><i style="background:#c8c8c0"></i><i style="background:#c8ccaa"></i><i style="background:#f0ec90"></i><i style="background:#141208"></i><i style="background:#889078"></i><i style="background:#6c5c20"></i><i style="background:#4c4420"></i>
<i style="background:#3c3c28"></i><i style="background:#a8ac88"></i><i style="background:#b8b8b0"></i><i style="background:#a88a1c"></i><i style="background:#a0a088"></i><i style="background:#dcc020"></i><i style="background:#a89020"></i><i style="background:#d8c440"></i><i style="background:#8a6e1c"></i><i style="background:#b89850"></i><i style="background:#a8a060"></i><i style="background:#e8d848"></i><i style="background:#2a2408"></i><i style="background:#4c4c28"></i><i style="background:#5090a8"></i><i style="background:#786c20"></i>
<i style="background:#6a7050"></i><i style="background:#c0a020"></i><i style="background:#607030"></i><i style="background:#8a7830"></i><i style="background:#f0e040"></i><i style="background:#403c18"></i><i style="background:#c8b030"></i><i style="background:#e0d040"></i><i style="background:#6c6c60"></i><i style="background:#a08c28"></i><i style="background:#e8d030"></i><i style="background:#d0c060"></i><i style="background:#f0f0e0"></i><i style="background:#4a4010"></i><i style="background:#3c3810"></i><i style="background:#a8a890"></i>
<i style="background:#a8ac70"></i><i style="background:#b8d0c8"></i><i style="background:#a8b078"></i><i style="background:#d0d098"></i><i style="background:#a09a30"></i><i style="background:#403c20"></i><i style="background:#e8e8d8"></i><i style="background:#d0c850"></i><i style="background:#f0e040"></i><i style="background:#585030"></i><i style="background:#4c4020"></i><i style="background:#6c6c38"></i><i style="background:#d8c030"></i><i style="background:#b0a050"></i><i style="background:#403810"></i><i style="background:#f0e050"></i>
<i style="background:#383428"></i><i style="background:#485030"></i><i style="background:#d8c850"></i><i style="background:#585020"></i><i style="background:#484018"></i><i style="background:#404018"></i><i style="background:#2070b0"></i><i style="background:#205870"></i><i style="background:#f0d830"></i><i style="background:#50501c"></i><i style="background:#486058"></i><i style="background:#c8d8d0"></i><i style="background:#6c5018"></i><i style="background:#c8c090"></i><i style="background:#90a8e0"></i><i style="background:#e8e050"></i>
<i style="background:#c8b020"></i><i style="background:#d8d870"></i><i style="background:#b09020"></i><i style="background:#303818"></i><i style="background:#c8a828"></i><i style="background:#585810"></i><i style="background:#d8f0f0"></i><i style="background:#303028"></i><i style="background:#a89020"></i><i style="background:#4a4818"></i><i style="background:#d8d8c0"></i><i style="background:#b09818"></i><i style="background:#b0b8a0"></i><i style="background:#f0d838"></i><i style="background:#b8c080"></i><i style="background:#98b0a0"></i>
<i style="background:#b0c0a0"></i><i style="background:#e8e050"></i><i style="background:#103060"></i><i style="background:#585810"></i><i style="background:#a8b078"></i><i style="background:#f0c030"></i><i style="background:#383020"></i><i style="background:#b0a880"></i><i style="background:#d8e0b0"></i><i style="background:#f8f8f0"></i><i style="background:#e0d8b0"></i><i style="background:#c8d0f0"></i><i style="background:#6c7070"></i><i style="background:#f0e890"></i><i style="background:#081030"></i><i style="background:#a88018"></i>
<i style="background:#d0c040"></i><i style="background:#f0e040"></i><i style="background:#e0d8b0"></i><i style="background:#182830"></i><i style="background:#f8f8f8"></i><i style="background:#706048"></i><i style="background:#c8d8d0"></i><i style="background:#a8a090"></i><i style="background:#e8c830"></i><i style="background:#584c20"></i><i style="background:#182010"></i><i style="background:#e8d848"></i><i style="background:#e8b028"></i><i style="background:#d0a020"></i><i style="background:#e8e0a0"></i><i style="background:#a8b8a8"></i>
<i style="background:#d8e098"></i><i style="background:#d8b020"></i><i style="background:#e0c048"></i><i style="background:#f0f0e0"></i><i style="background:#283040"></i><i style="background:#405828"></i><i style="background:#886020"></i><i style="background:#98a8a0"></i><i style="background:#f0c820"></i><i style="background:#706018"></i><i style="background:#e8d850"></i><i style="background:#d8c040"></i><i style="background:#c89018"></i><i style="background:#f0f0f0"></i><i style="background:#c0b8d8"></i><i style="background:#e0d870"></i>
<i style="background:#e8e0f0"></i><i style="background:#586058"></i><i style="background:#981818"></i><i style="background:#f0c030"></i><i style="background:#406020"></i><i style="background:#a87830"></i><i style="background:#080818"></i><i style="background:#585850"></i><i style="background:#e8e080"></i><i style="background:#c09018"></i><i style="background:#e0d0c0"></i><i style="background:#d8b028"></i><i style="background:#141414"></i><i style="background:#f0d020"></i><i style="background:#e8d020"></i><i style="background:#485878"></i>
<i style="background:#c09018"></i><i style="background:#101010"></i><i style="background:#f8f8f8"></i><i style="background:#304020"></i><i style="background:#e8c820"></i><i style="background:#88a030"></i><i style="background:#283038"></i><i style="background:#c8d0e8"></i><i style="background:#b8a8a0"></i><i style="background:#302020"></i><i style="background:#081410"></i><i style="background:#081410"></i><i style="background:#9878d8"></i><i style="background:#c82828"></i><i style="background:#181810"></i><i style="background:#201c18"></i>
<i style="background:#909090"></i><i style="background:#e0d8e8"></i><i style="background:#282828"></i><i style="background:#686068"></i><i style="background:#d8e050"></i><i style="background:#383830"></i><i style="background:#302c28"></i><i style="background:#d8b028"></i><i style="background:#404808"></i><i style="background:#505050"></i><i style="background:#f8f8f8"></i><i style="background:#101810"></i><i style="background:#f8f8f8"></i><i style="background:#f0d820"></i><i style="background:#e8d020"></i><i style="background:#e0c820"></i>
<i style="background:#282820"></i><i style="background:#181810"></i><i style="background:#e0c020"></i><i style="background:#303028"></i><i style="background:#282820"></i><i style="background:#202018"></i><i style="background:#e8d020"></i><i style="background:#f8f8f0"></i><i style="background:#e8d030"></i><i style="background:#282018"></i><i style="background:#403830"></i><i style="background:#e0d040"></i><i style="background:#f0f0f0"></i><i style="background:#283830"></i><i style="background:#100c10"></i><i style="background:#f0f0f0"></i></div>

<div class="t" style="left:1077px;top:467px;font-size:8px">256</div>
<svg class="a" style="left:1100px;top:466px" width="110" height="12" fill="none" stroke="#aaa"><rect x="2" y="2" width="7" height="7"/><circle cx="27" cy="6" r="3.500"/><path d="M46 9V4l3-2 3 2v5z"/><path d="M78 3h7v7h-5"/><path d="M101 3h6M102 3v7h4V3"/></svg>
<div class="lg" style="left:1034px;top:480px;width:216px"></div>
<div class="t" style="left:1045px;top:485px">Image Size</div>
<div class="t" style="left:1039px;top:499px">W:</div>
<div class="n" style="left:1051px;top:497px;width:33px;height:14px;line-height:12px">1600</div>
<div class="t" style="left:1086px;top:499px">px</div>
<div class="t" style="left:1040px;top:515px">H:</div>
<div class="n" style="left:1051px;top:513px;width:33px;height:14px;line-height:12px">5000</div>
<div class="t" style="left:1086px;top:515px">px</div>
<div class="a" style="left:1099px;top:504px;width:7px;height:17px;border:solid #111;border-width:1.500px 1.500px 1.500px 0"></div>
<div class="a" style="left:1109px;top:507px;width:5px;height:11px;background:#777;border-radius:2px"></div>
<div class="t" style="left:1160px;top:499px">Percent:</div>
<div class="n" style="left:1194px;top:497px;width:41px;height:14px;line-height:12px">100</div>
<div class="t" style="left:1238px;top:499px">%</div>
<div class="t" style="left:1119px;top:516px">Quality:</div>
<div class="s" style="left:1150px;top:513px;width:96px">Bicubic</div>
<div class="lg" style="left:1034px;top:533px;width:216px"></div>
<div class="t" style="left:1045px;top:534px">Animation</div>
<div class="t" style="left:1038px;top:548px;color:#999;font-size:8px;letter-spacing:-.1px">Looping Options:</div>
<div class="s" style="left:1101px;top:546px;width:145px;color:#999;border-color:#ddd">Once</div>
<div class="a" style="left:1037px;top:562px;width:89px;height:16px;background:#e8e8e8;border:1px solid #ccc;border-width:1px 0 0 1px"></div>
<div class="t" style="left:1072px;top:565px;font-size:7.5px;color:#666">1 of 1</div>
<div class="a" style="left:1126px;top:562px;width:120px;height:16px;background:#cfe2f0"></div>
<div class="t" style="left:1131px;top:565px;font-size:7.5px;color:#9aa8b4;word-spacing:7px">◀◀ ◀▌ ▶ ▌▶ ▶▶</div>

<!-- bottom bar -->
<div class="a" style="left:0;top:704px;width:1280px;height:16px;background:linear-gradient(90deg,#fdc11a 0,#f0b81c 300px,#c8a01f 530px,#8a7024 800px,#5a4a25 1030px,#45391f 1280px)"></div>

<!-- portrait -->
<svg class="a" style="left:20px;top:10px" width="280" height="260" viewBox="0 0 840 780">
<defs><clipPath id="cc"><circle cx="425" cy="385" r="342"/></clipPath></defs>
<circle cx="425" cy="385" r="360" fill="#070707"/>
<g clip-path="url(#cc)"><g style="filter:blur(1.500px)">
<rect x="60" y="30" width="740" height="720" fill="#6c6e6c"/>
<path d="M60 520V300L180 155 265 345 115 520z" fill="#a4a799"/>
<path d="M180 150L370 40 350 200 310 310 265 345z" fill="#565c60"/>
<path d="M365 30H800V400L700 345 530 340 520 200z" fill="#1a1c22"/>
<path d="M670 175L735 200 800 300V460L745 430 715 360z" fill="#4f6c69"/>
<path d="M540 345L700 350 745 430 790 620 650 560z" fill="#77736c"/>
<path d="M470 750L560 560 670 640 620 750z" fill="#6c6660"/>
<path d="M110 515C150 450 220 380 305 320L420 490 525 320C570 330 595 345 600 355 630 430 650 530 655 570 600 590 570 570 538 560 530 620 500 700 470 750H270C220 680 150 600 110 515z" fill="#b55f1e"/>
<path d="M150 500C220 480 280 500 320 570L330 720C250 660 180 580 150 500z" fill="#bf6722"/>
<path d="M320 500C300 600 300 660 330 720" stroke="#7a3c10" stroke-width="8" fill="none"/>
<path d="M145 480C220 470 280 490 320 560" stroke="#7d4012" stroke-width="8" fill="none"/>
<path d="M300 320C340 380 380 480 420 515 470 470 510 390 530 320L480 350 340 340z" fill="#8f4a17"/>
<path d="M335 300C350 380 390 420 420 425 470 420 505 370 520 290L520 340 430 445 340 350z" fill="#a0622f"/>
<path d="M538 560L650 575 660 650 640 660C600 630 560 600 538 560z" fill="#9a6a42"/>
<ellipse cx="306" cy="265" rx="15" ry="38" fill="#8a5228"/><ellipse cx="532" cy="265" rx="13" ry="36" fill="#8a5228"/>
<ellipse cx="422" cy="275" rx="108" ry="140" fill="#a87040"/>
<ellipse cx="430" cy="270" rx="72" ry="105" fill="#bf8a58"/>
<path d="M305 240C292 160 316 96 375 80 430 64 500 84 522 145 542 180 536 228 522 255 510 210 490 185 450 190 400 200 350 190 325 215z" fill="#120f0e"/>
<path d="M345 268C360 252 385 255 395 270 375 280 355 278 345 268zM450 268C465 254 490 255 502 270 485 280 460 280 450 268z" fill="#2e1c10"/>
<path d="M335 245C355 235 385 238 400 250M445 250C465 236 495 238 510 250" stroke="#241409" stroke-width="8" fill="none"/>
<path d="M415 285L400 335 440 340 430 285z" fill="#cf9c6a"/>
<path d="M385 360C410 345 450 345 470 358 445 358 410 360 385 360z" fill="#4a2a16"/>
<path d="M395 375C420 385 445 382 460 372" stroke="#6e3a22" stroke-width="6" fill="none"/>
</g></g>
</svg>

<!-- Big headline text -->
<svg class="a" style="left:0;top:0" width="1280" height="720" font-family="'Liberation Sans',sans-serif" font-weight="bold">
<defs>
<filter id="sd" filterUnits="userSpaceOnUse" x="300" y="200" width="280" height="200" color-interpolation-filters="sRGB">
<feDropShadow dx="2" dy="2" stdDeviation="1.500" flood-color="#000" flood-opacity=".7"/>
</filter>
</defs>
<g style="filter:drop-shadow(1px 2px 1.500px rgba(0,0,0,.45))" fill="#fdc31f" stroke="#1a1308" stroke-width="8.500" stroke-linejoin="round" paint-order="stroke">
<text transform="translate(156,379) scale(.678,1)" text-anchor="middle" font-size="141">PSD</text>
<text transform="translate(154,535) scale(.655,1)" text-anchor="middle" font-size="142">TO</text>
<text transform="translate(159,691) scale(.7,1)" text-anchor="middle" font-size="142">HTML</text>
</g>
<g filter="url(#sd)" fill="#fdc11c">
<text transform="translate(352,335) scale(.95,1)" font-size="109">[</text>
<text transform="translate(394,342) scale(.7,1)" font-size="127">#2</text>
<text transform="translate(499,335) scale(.95,1)" font-size="109">]</text>
</g>
</svg>

</body></html>
